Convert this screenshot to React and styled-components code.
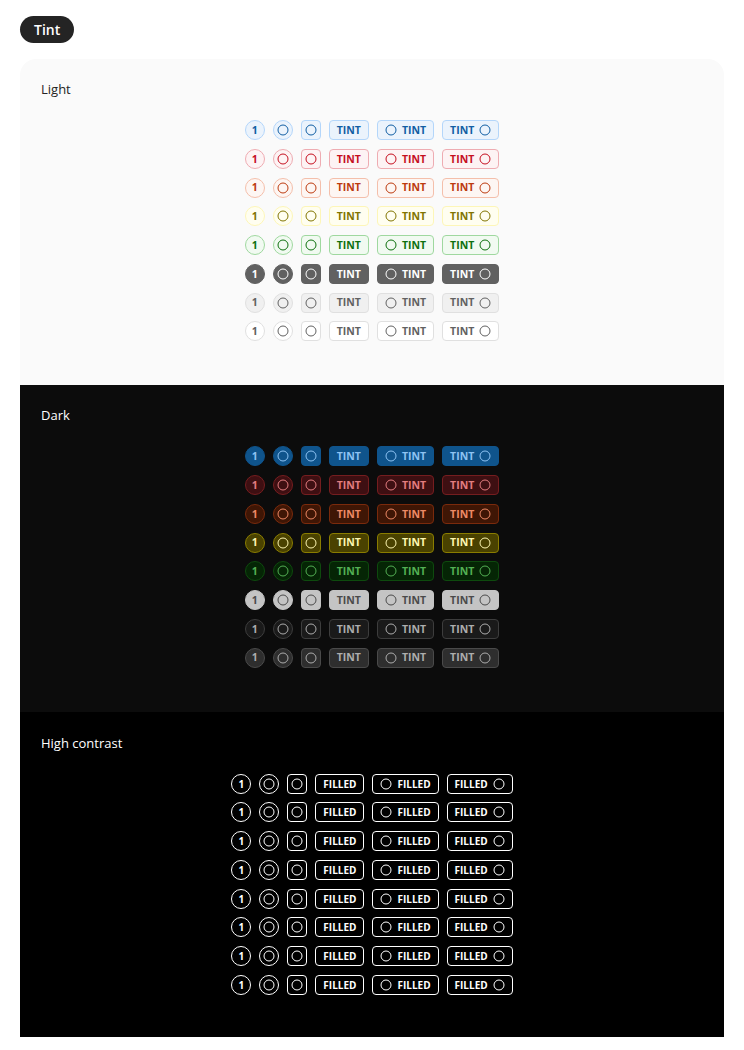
import React from "react";
import styled, { createGlobalStyle } from "styled-components";

const GlobalStyle = createGlobalStyle`
  html, body {
    margin: 0;
    padding: 0;
    background: #ffffff;
    font-family: "Open Sans", "Noto Sans", sans-serif;
  }
`;

const Page = styled.div`
  padding: 16px 20px 12px 20px;
`;

const TitlePill = styled.div`
  display: inline-flex;
  align-items: center;
  height: 27px;
  padding: 0 14px;
  border-radius: 14px;
  background: #242424;
  color: #ffffff;
  font-size: 14px;
  font-weight: 600;
`;

const Card = styled.div`
  margin-top: 16px;
  border-radius: 16px 16px 0 0;
  overflow: hidden;
`;

const Section = styled.section`
  background: ${(p) => p.$bg};
  padding: ${(p) => (p.$hc ? "21px 21px 42px 21px" : "20px 21px 44px 21px")};
`;

const SectionLabel = styled.div`
  height: 20px;
  line-height: 20px;
  font-size: 13px;
  color: ${(p) => p.$color};
`;

const Grid = styled.div`
  margin-top: 21px;
  display: grid;
  grid-template-columns: repeat(6, auto);
  justify-content: center;
  justify-items: start;
  column-gap: 8px;
  row-gap: 8.75px;
`;

const Badge = styled.span`
  box-sizing: border-box;
  display: inline-flex;
  align-items: center;
  justify-content: center;
  gap: 5px;
  height: 20px;
  min-width: 20px;
  padding: ${(p) => (p.$iconOnly ? "0" : "0 7px")};
  border-radius: ${(p) => (p.$circular ? "10px" : "4px")};
  border: 1px solid ${(p) => p.$tone.bd};
  background: ${(p) => p.$tone.bg};
  color: ${(p) => p.$tone.fg};
  font-size: ${(p) => (p.$hc ? "10px" : "10.5px")};
  font-weight: 700;
  line-height: 1;
  white-space: nowrap;
`;

const RingIcon = () => (
  <svg width="12" height="12" viewBox="0 0 12 12" fill="none">
    <circle cx="6" cy="6" r="5" stroke="currentColor" strokeWidth="1" />
  </svg>
);

const lightTones = [
  { bg: "#ebf3fc", fg: "#115ea3", bd: "#b4d6fa" },
  { bg: "#fdf3f4", fg: "#c50f1f", bd: "#eeacb2" },
  { bg: "#fdf6f3", fg: "#bc3a0e", bd: "#f4bfab" },
  { bg: "#fffef0", fg: "#817400", bd: "#fdf6b8" },
  { bg: "#f1faf1", fg: "#0e700e", bd: "#9fd89f" },
  { bg: "#616161", fg: "#ffffff", bd: "#616161" },
  { bg: "#f0f0f0", fg: "#616161", bd: "#e0e0e0" },
  { bg: "#ffffff", fg: "#616161", bd: "#e0e0e0" },
];

const darkTones = [
  { bg: "#0f548c", fg: "#8ec3f3", bd: "#0f548c" },
  { bg: "#3e0f12", fg: "#e37d80", bd: "#751d1f" },
  { bg: "#3f1605", fg: "#ee8a66", bd: "#7a2a0c" },
  { bg: "#4a4200", fg: "#fef7b2", bd: "#8a7d00" },
  { bg: "#052505", fg: "#54b054", bd: "#0e4a0e" },
  { bg: "#c4c4c4", fg: "#4a4a4a", bd: "#c4c4c4" },
  { bg: "#1a1a1a", fg: "#adadad", bd: "#3d3d3d" },
  { bg: "#2e2e2e", fg: "#adadad", bd: "#4a4a4a" },
];

const hcTone = { bg: "#000000", fg: "#ffffff", bd: "#ffffff" };
const hcTones = Array.from({ length: 8 }, () => hcTone);

function BadgeRow({ tone, text, hc }) {
  return (
    <>
      <Badge $tone={tone} $hc={hc} $circular $iconOnly>1</Badge>
      <Badge $tone={tone} $hc={hc} $circular $iconOnly><RingIcon /></Badge>
      <Badge $tone={tone} $hc={hc} $iconOnly><RingIcon /></Badge>
      <Badge $tone={tone} $hc={hc}>{text}</Badge>
      <Badge $tone={tone} $hc={hc}><RingIcon />{text}</Badge>
      <Badge $tone={tone} $hc={hc}>{text}<RingIcon /></Badge>
    </>
  );
}

function ThemeBlock({ label, bg, labelColor, tones, text, hc }) {
  return (
    <Section $bg={bg} $hc={hc}>
      <SectionLabel $color={labelColor}>{label}</SectionLabel>
      <Grid>
        {tones.map((t, i) => (
          <BadgeRow key={i} tone={t} text={text} hc={hc} />
        ))}
      </Grid>
    </Section>
  );
}

export default function App() {
  return (
    <>
      <GlobalStyle />
      <Page>
        <TitlePill>Tint</TitlePill>
        <Card>
          <ThemeBlock label="Light" bg="#fafafa" labelColor="#242424" tones={lightTones} text="TINT" />
          <ThemeBlock label="Dark" bg="#0c0c0c" labelColor="#ffffff" tones={darkTones} text="TINT" />
          <ThemeBlock label="High contrast" bg="#000000" labelColor="#ffffff" tones={hcTones} text="FILLED" hc />
        </Card>
      </Page>
    </>
  );
}
